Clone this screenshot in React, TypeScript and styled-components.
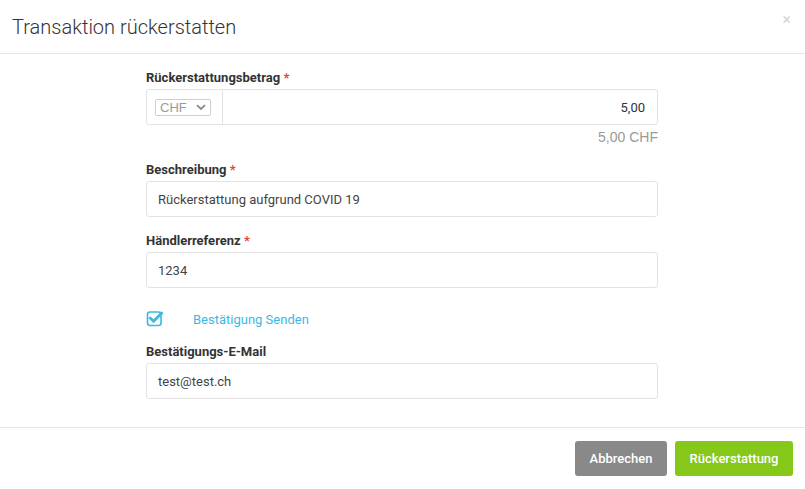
import React, { useState } from 'react';
import styled, { createGlobalStyle } from 'styled-components';

const GlobalStyle = createGlobalStyle`
  html, body {
    margin: 0;
    padding: 0;
    background: #ffffff;
  }
  body {
    font-family: Roboto, "Liberation Sans", Arial, sans-serif;
    color: #333333;
  }
  * { box-sizing: border-box; }
`;

export default function App() {
  const [sendConfirmation, setSendConfirmation] = useState(true);

  return (
    <>
      <GlobalStyle />
      <Modal>
        <Header>
          <Title>Transaktion rückerstatten</Title>
          <CloseButton type="button" aria-label="Schliessen">×</CloseButton>
        </Header>

        <Body>
          <Form>
            <FormGroup>
              <Label>Rückerstattungsbetrag <Required>*</Required></Label>
              <InputGroup>
                <Addon>
                  <CurrencySelect>
                    <span>CHF</span>
                    <svg width="10" height="7" viewBox="0 0 10 7">
                      <path d="M1 1.2 L5 5 L9 1.2" fill="none" stroke="#8a8a8a" strokeWidth="1.8" />
                    </svg>
                  </CurrencySelect>
                </Addon>
                <GroupInput defaultValue="5,00" $align="right" />
              </InputGroup>
              <HelpText>5,00 CHF</HelpText>
            </FormGroup>

            <FormGroup>
              <Label>Beschreibung <Required>*</Required></Label>
              <TextInput defaultValue="Rückerstattung aufgrund COVID 19" />
            </FormGroup>

            <FormGroup>
              <Label>Händlerreferenz <Required>*</Required></Label>
              <TextInput defaultValue="1234" />
            </FormGroup>

            <CheckRow onClick={() => setSendConfirmation(!sendConfirmation)}>
              <CheckIcon width="18" height="18" viewBox="0 0 18 18">
                <rect x="1.5" y="3" width="13.5" height="13.5" rx="2.5" fill="none" stroke="#3cb8e4" strokeWidth="1.6" />
                {sendConfirmation && (
                  <path d="M4.4 9.2 L7.6 12.2 L15.6 4.2" fill="none" stroke="#3cb8e4" strokeWidth="2.8" strokeLinecap="square" />
                )}
              </CheckIcon>
              <CheckLabel>Bestätigung Senden</CheckLabel>
            </CheckRow>

            <FormGroup>
              <Label>Bestätigungs-E-Mail</Label>
              <TextInput defaultValue="test@test.ch" />
            </FormGroup>
          </Form>
        </Body>

        <Footer>
          <Button type="button" $variant="default">Abbrechen</Button>
          <Button type="button" $variant="primary">Rückerstattung</Button>
        </Footer>
      </Modal>
    </>
  );
}

// ─── STYLED COMPONENTS ─────────────────────────────────────────────

const Modal = styled.div`
  width: 805px;
  min-height: 489px;
  background: #ffffff;
  display: flex;
  flex-direction: column;
`;

const Header = styled.div`
  height: 54px;
  display: flex;
  align-items: center;
  justify-content: space-between;
  padding: 0 12px;
  border-bottom: 1px solid #e5e5e5;
`;

const Title = styled.h4`
  margin: 0;
  font-size: 20px;
  font-weight: 300;
  color: #333333;
  line-height: 1;
`;

const CloseButton = styled.button`
  background: transparent;
  border: none;
  padding: 0;
  margin-top: -15px;
  margin-right: 2px;
  color: #c8c8c8;
  font-size: 16px;
  font-weight: 300;
  font-family: inherit;
  line-height: 1;
  cursor: pointer;
`;

const Body = styled.div`
  padding: 16px 0 28px 146px;
  display: flex;
`;

const Form = styled.div`
  width: 512px;
  display: flex;
  flex-direction: column;
`;

const FormGroup = styled.div`
  display: flex;
  flex-direction: column;
  margin-bottom: 16px;

  &:last-child { margin-bottom: 0; }
`;

const Label = styled.label`
  font-size: 13px;
  font-weight: 700;
  line-height: 16px;
  color: #333333;
  margin-bottom: 3px;
`;

const Required = styled.span`
  color: #e5433a;
`;

const InputGroup = styled.div`
  display: flex;
  height: 36px;
  border: 1px solid #e3e3e3;
  border-radius: 3px;
`;

const Addon = styled.div`
  width: 76px;
  display: flex;
  align-items: center;
  padding-left: 8px;
  border-right: 1px solid #e3e3e3;
  flex-shrink: 0;
`;

const CurrencySelect = styled.div`
  width: 56px;
  height: 17px;
  border: 1px solid #d0d0d0;
  border-radius: 2px;
  display: flex;
  align-items: center;
  justify-content: space-between;
  padding: 0 4px 0 4px;
  font-size: 13px;
  color: #9a9a9a;
  font-family: "Liberation Sans", Arial, sans-serif;
`;

const GroupInput = styled.input<{ $align?: 'left' | 'right' }>`
  flex: 1;
  min-width: 0;
  border: none;
  outline: none;
  background: transparent;
  font-family: inherit;
  font-size: 13px;
  color: #333333;
  padding: 0 12px;
  text-align: ${({ $align }) => $align ?? 'left'};
`;

const HelpText = styled.div`
  text-align: right;
  font-size: 14px;
  line-height: 18px;
  color: #9a9a9a;
  margin-top: 3px;
  font-family: "Liberation Sans", Arial, sans-serif;
`;

const TextInput = styled.input`
  height: 36px;
  border: 1px solid #e3e3e3;
  border-radius: 3px;
  padding: 0 11px;
  font-family: inherit;
  font-size: 13px;
  color: #444444;
  outline: none;
`;

const CheckRow = styled.div`
  display: flex;
  align-items: center;
  height: 20px;
  margin: 5px 0 15px;
  cursor: pointer;
`;

const CheckIcon = styled.svg`
  flex-shrink: 0;
  margin-top: -2px;
`;

const CheckLabel = styled.span`
  margin-left: 29px;
  font-size: 13px;
  color: #3cb8e4;
`;

const Footer = styled.div`
  border-top: 1px solid #e5e5e5;
  padding: 13px 12px 13px;
  display: flex;
  justify-content: flex-end;
  gap: 8px;
`;

const Button = styled.button<{ $variant: 'default' | 'primary' }>`
  height: 35px;
  padding: 0;
  border: none;
  border-radius: 3px;
  font-family: inherit;
  font-size: 13px;
  font-weight: 500;
  color: #ffffff;
  background-color: ${({ $variant }) => ($variant === 'primary' ? '#85c81a' : '#898989')};
  width: ${({ $variant }) => ($variant === 'primary' ? '118px' : '92px')};
  cursor: pointer;
`;
